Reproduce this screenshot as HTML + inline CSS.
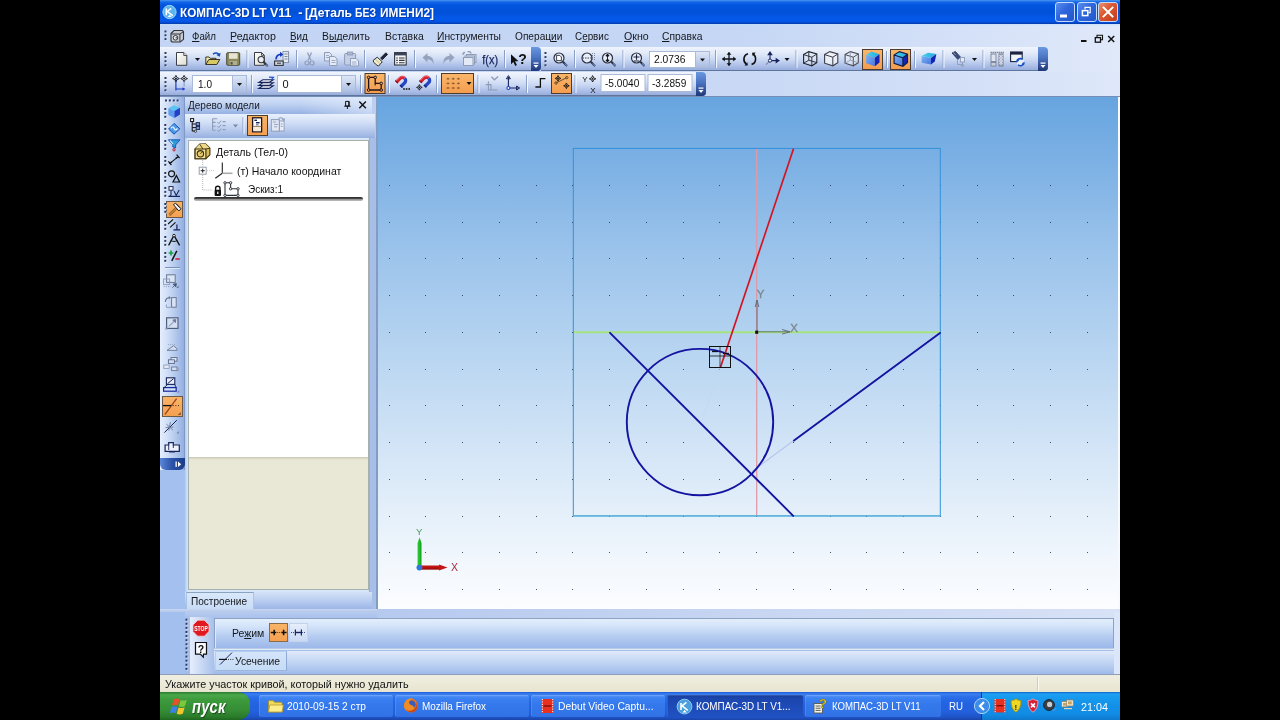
<!DOCTYPE html>
<html lang="ru">
<head>
<meta charset="utf-8">
<title>КОМПАС-3D LT V11 - [Деталь БЕЗ ИМЕНИ2]</title>
<style>
*{box-sizing:border-box;margin:0;padding:0}
html,body{width:1280px;height:720px;overflow:hidden;background:#000}
body{font-family:"Liberation Sans",sans-serif;font-size:11px;color:#000;position:relative}
#root{position:absolute;left:-16px;top:-16px;width:1312px;height:752px;overflow:hidden;background:#000;filter:blur(0.6px)}
#frame{position:absolute;left:16px;top:16px;width:1280px;height:720px}
.t{position:absolute;white-space:nowrap}
svg{position:absolute;left:0;top:0;overflow:visible}
svg text{font-family:"Liberation Sans",sans-serif}
</style>
</head>
<body>
<div id="root"><div id="frame">
<!-- s_top -->
<div style="position:absolute;left:160px;top:0px;width:960px;height:720px;background:#d9e4f8"></div>
<div style="position:absolute;left:160px;top:-16px;width:960px;height:17px;background:#4a95f0"></div>
<div style="position:absolute;left:160px;top:0px;width:960px;height:24px;background:linear-gradient(to bottom,#4a95f0 0,#1467e8 2px,#0355df 5px,#0250d8 12px,#0458e8 18px,#0557ea 21px,#0447cc 23px,#03389e 24px)"></div>
<div class="t" style="left:180px;top:3.5px;width:260px;height:18px;color:#fff;font-weight:bold;font-size:12.5px"><span style="position:absolute;left:-0.4px;top:0;line-height:18px;white-space:pre;transform:scaleX(0.9345);transform-origin:0 50%;text-shadow:1px 1px 0 rgba(10,40,130,0.55)">КОМПАС-3D </span><span style="position:absolute;left:72.1px;top:0;line-height:18px;white-space:pre;letter-spacing:0.156px;text-shadow:1px 1px 0 rgba(10,40,130,0.55)">LT </span><span style="position:absolute;left:90.2px;top:0;line-height:18px;white-space:pre;transform:scaleX(0.9929);transform-origin:0 50%;text-shadow:1px 1px 0 rgba(10,40,130,0.55)">V11 </span><span style="position:absolute;left:118.3px;top:0;line-height:18px;white-space:pre;text-shadow:1px 1px 0 rgba(10,40,130,0.55)">- </span><span style="position:absolute;left:124.6px;top:0;line-height:18px;white-space:pre;transform:scaleX(0.9650);transform-origin:0 50%;text-shadow:1px 1px 0 rgba(10,40,130,0.55)">[Деталь </span><span style="position:absolute;left:175.2px;top:0;line-height:18px;white-space:pre;transform:scaleX(0.8349);transform-origin:0 50%;text-shadow:1px 1px 0 rgba(10,40,130,0.55)">БЕЗ </span><span style="position:absolute;left:199.6px;top:0;line-height:18px;white-space:pre;transform:scaleX(0.9497);transform-origin:0 50%;text-shadow:1px 1px 0 rgba(10,40,130,0.55)">ИМЕНИ2]</span></div>
<div style="position:absolute;left:1055px;top:2px;width:20px;height:20px;border:1px solid #c4dcfa;border-radius:3px;background:linear-gradient(135deg,#5a8ff0 0,#2f66dc 45%,#2358cc 100%)"></div>
<div style="position:absolute;left:1077px;top:2px;width:20px;height:20px;border:1px solid #c4dcfa;border-radius:3px;background:linear-gradient(135deg,#5a8ff0 0,#2f66dc 45%,#2358cc 100%)"></div>
<div style="position:absolute;left:1098px;top:2px;width:20px;height:20px;border:1px solid #c4dcfa;border-radius:3px;background:linear-gradient(135deg,#ee9070 0,#dc5a34 40%,#c23c18 100%)"></div>
<div style="position:absolute;left:160px;top:24px;width:960px;height:23px;background:linear-gradient(to right,#c3d4f4 0,#c5d7f5 60%,#d2dff7 80%,#e0e9fa 100%)"></div>
<div style="position:absolute;left:160px;top:24px;width:960px;height:2px;background:linear-gradient(to bottom,rgba(190,222,250,0.7),rgba(190,222,250,0))"></div>
<div class="t" style="left:192.30px;top:27.79px;font-size:11px;line-height:16px;color:#15171c;transform:scaleX(0.8838);transform-origin:0 50%;"><u>Ф</u>айл</div>
<div class="t" style="left:230.40px;top:27.79px;font-size:11px;line-height:16px;color:#15171c;transform:scaleX(0.9672);transform-origin:0 50%;"><u>Р</u>едактор</div>
<div class="t" style="left:290.40px;top:27.79px;font-size:11px;line-height:16px;color:#15171c;transform:scaleX(0.8944);transform-origin:0 50%;"><u>В</u>ид</div>
<div class="t" style="left:322.30px;top:27.79px;font-size:11px;line-height:16px;color:#15171c;transform:scaleX(0.9439);transform-origin:0 50%;">В<u>ы</u>делить</div>
<div class="t" style="left:384.50px;top:27.79px;font-size:11px;line-height:16px;color:#15171c;transform:scaleX(0.9465);transform-origin:0 50%;">Вст<u>а</u>вка</div>
<div class="t" style="left:436.80px;top:27.79px;font-size:11px;line-height:16px;color:#15171c;transform:scaleX(0.9331);transform-origin:0 50%;"><u>И</u>нструменты</div>
<div class="t" style="left:514.80px;top:27.79px;font-size:11px;line-height:16px;color:#15171c;transform:scaleX(0.9212);transform-origin:0 50%;">Операц<u>и</u>и</div>
<div class="t" style="left:575.40px;top:27.79px;font-size:11px;line-height:16px;color:#15171c;transform:scaleX(0.8973);transform-origin:0 50%;">С<u>е</u>рвис</div>
<div class="t" style="left:623.50px;top:27.79px;font-size:11px;line-height:16px;color:#15171c;transform:scaleX(0.9663);transform-origin:0 50%;"><u>О</u>кно</div>
<div class="t" style="left:661.80px;top:27.79px;font-size:11px;line-height:16px;color:#15171c;transform:scaleX(0.9362);transform-origin:0 50%;"><u>С</u>правка</div>
<div style="position:absolute;left:160px;top:47px;width:960px;height:25px;background:linear-gradient(to right,#c4d5f4 0,#c8d8f5 60%,#d6e2f8 85%,#e0e9fa 100%)"></div>
<div style="position:absolute;left:160px;top:72px;width:960px;height:25px;background:linear-gradient(to right,#c4d4f3 0,#c8d8f5 60%,#d4e0f7 85%,#dee8fa 100%)"></div>
<div style="position:absolute;left:160px;top:47px;width:381px;height:24px;background:linear-gradient(to bottom,#f0f4fd 0,#e3ebf9 25%,#cad8f3 55%,#a9bce6 85%,#98addc 100%);border-bottom:1px solid #5f769c;border-radius:0 0 4px 0"></div>
<div style="position:absolute;left:541px;top:47px;width:507px;height:24px;background:linear-gradient(to bottom,#f0f4fd 0,#e3ebf9 25%,#cad8f3 55%,#a9bce6 85%,#98addc 100%);border-bottom:1px solid #5f769c;border-radius:0 4px 4px 0"></div>
<div style="position:absolute;left:160px;top:72px;width:546px;height:24px;background:linear-gradient(to bottom,#f0f4fd 0,#e3ebf9 25%,#cad8f3 55%,#a9bce6 85%,#98addc 100%);border-bottom:1px solid #5f769c;border-radius:0 4px 4px 0"></div>
<div style="position:absolute;left:531px;top:47px;width:10px;height:24px;background:linear-gradient(to bottom,#6a98e0 0,#4a72c0 45%,#1e3878 100%);border-radius:0 4px 4px 0"></div>
<div style="position:absolute;left:1038px;top:47px;width:10px;height:24px;background:linear-gradient(to bottom,#6a98e0 0,#4a72c0 45%,#1e3878 100%);border-radius:0 4px 4px 0"></div>
<div style="position:absolute;left:696px;top:72px;width:10px;height:24px;background:linear-gradient(to bottom,#6a98e0 0,#4a72c0 45%,#1e3878 100%);border-radius:0 4px 4px 0"></div>
<div style="position:absolute;left:160px;top:96px;width:960px;height:1.4px;background:#748eb6"></div>
<!-- s_left -->
<div style="position:absolute;left:160px;top:97px;width:25px;height:579px;background:#a3c0ee"></div>
<div style="position:absolute;left:160px;top:97px;width:25px;height:373px;background:linear-gradient(to right,#e4eefc 0,#d4e2f8 25%,#b4caee 60%,#90acdf 100%);border-radius:0 0 0 0"></div>
<div style="position:absolute;left:184px;top:97px;width:1px;height:373px;background:#7f98c8"></div>
<div style="position:absolute;left:160px;top:458px;width:25px;height:12px;background:linear-gradient(to right,#5a86d8 0,#2a52a8 50%,#1a3c88 100%);border-radius:0 0 6px 6px"></div>
<div style="position:absolute;left:166px;top:201px;width:17px;height:17px;background:linear-gradient(to bottom,#f9b468,#f5a050);border:1px solid #6b5a4a"></div>
<div style="position:absolute;left:162px;top:396px;width:21px;height:21px;background:linear-gradient(to bottom,#f9b468,#f5a050);border:1px solid #6b5a4a"></div>
<!-- s_tree -->
<div style="position:absolute;left:185px;top:97px;width:192px;height:515px;background:#b6cbee"></div>
<div style="position:absolute;left:185px;top:97px;width:187px;height:17px;background:linear-gradient(to bottom,#d3e1f7 0,#c1d3f2 40%,#a4bde9 80%,#96b1e2 100%)"></div>
<div style="position:absolute;left:300px;top:97px;width:72px;height:17px;background:linear-gradient(to right,rgba(235,242,253,0),rgba(235,242,253,0.55))"></div>
<div class="t" style="left:188.00px;top:97.19px;font-size:11px;line-height:16px;color:#1a1c22;transform:scaleX(0.9103);transform-origin:0 50%;">Дерево модели</div>
<div style="position:absolute;left:185px;top:114px;width:190px;height:24px;background:linear-gradient(to bottom,#e8f0fc 0,#d2dff6 35%,#b0c4ea 75%,#98b0e0 100%)"></div>
<div style="position:absolute;left:247px;top:115px;width:21px;height:21px;background:linear-gradient(to bottom,#f9b468,#f5a050);border:1px solid #4c4030"></div>
<div style="position:absolute;left:185px;top:138px;width:187px;height:454px;background:linear-gradient(to right,#b4cdf0 0,#d6e6f6 3px,#d6e6f6 183px,#b8cdee 187px);"></div>
<div style="position:absolute;left:188px;top:140px;width:180.5px;height:449.6px;background:#e9e7d6;border:1px solid #a6b0ae"></div>
<div style="position:absolute;left:189px;top:141px;width:179px;height:316px;background:#fff"></div>
<div style="position:absolute;left:189px;top:457px;width:179px;height:3px;background:linear-gradient(to bottom,#c9c7b4,#dcd9c6,#ece9d8)"></div>
<div style="position:absolute;left:368.5px;top:138px;width:8.5px;height:474px;background:linear-gradient(to right,#92a8cc 0,#a6bee8 1.5px,#a8c0e8 100%)"></div>
<div style="position:absolute;left:372px;top:97px;width:5px;height:17px;background:#bccff0"></div>
<div style="position:absolute;left:376.4px;top:97px;width:1.6px;height:515px;background:#849cc2"></div>
<div style="position:absolute;left:185px;top:591.5px;width:187px;height:19px;background:linear-gradient(to bottom,#d4e1f7 0,#b9cdf0 45%,#94b0e4 100%)"></div>
<div style="position:absolute;left:186px;top:592px;width:68px;height:18px;background:linear-gradient(to bottom,#d9e8fa,#c8dcf6);border:1px solid #a9c4e4;border-top-color:#8aa4c0"></div>
<div class="t" style="left:191.00px;top:592.79px;font-size:11px;line-height:16px;color:#15171c;transform:scaleX(0.9142);transform-origin:0 50%;">Построение</div>
<div class="t" style="left:216.00px;top:143.79px;font-size:11px;line-height:16px;color:#111;transform:scaleX(0.9623);transform-origin:0 50%;">Деталь (Тел-0)</div>
<div class="t" style="left:237.00px;top:162.79px;font-size:11px;line-height:16px;color:#111;transform:scaleX(0.9534);transform-origin:0 50%;">(т) Начало координат</div>
<div class="t" style="left:247.50px;top:181.49px;font-size:11px;line-height:16px;color:#111;transform:scaleX(0.9072);transform-origin:0 50%;">Эскиз:1</div>
<div style="position:absolute;left:194px;top:197px;width:168.5px;height:3.6px;background:linear-gradient(to bottom,#2c2c2c 0,#3c3c3c 35%,#8c8c8c 55%,#c4c4c4 100%);border-radius:2px"></div>
<!-- s_canvas -->
<svg width="1280" height="720" viewBox="0 0 1280 720">
<defs><linearGradient id="cg" x1="0" y1="0" x2="0" y2="1"><stop offset="0" stop-color="#67a5e0"/><stop offset="0.12" stop-color="#7bb0e4"/><stop offset="0.3" stop-color="#9bc3eb"/><stop offset="0.5" stop-color="#b8d5f1"/><stop offset="0.7" stop-color="#d5e6f7"/><stop offset="0.88" stop-color="#eef5fc"/><stop offset="1" stop-color="#fcfdff"/></linearGradient><clipPath id="cc"><rect x="378" y="97" width="742" height="512"/></clipPath></defs>
<rect x="378" y="97" width="742" height="512.5" fill="url(#cg)"/>
<rect x="376.4" y="97" width="1.6" height="512.5" fill="#849cc2"/>
<rect x="1118" y="97" width="2" height="513.5" fill="#f6f9fe"/>
<path d="M389 185h1v1h-1zM425 185h1v1h-1zM462 185h1v1h-1zM499 185h1v1h-1zM536 185h1v1h-1zM572 185h1v1h-1zM609 185h1v1h-1zM646 185h1v1h-1zM683 185h1v1h-1zM719 185h1v1h-1zM756 185h1v1h-1zM793 185h1v1h-1zM830 185h1v1h-1zM866 185h1v1h-1zM903 185h1v1h-1zM940 185h1v1h-1zM977 185h1v1h-1zM1013 185h1v1h-1zM1050 185h1v1h-1zM1087 185h1v1h-1zM389 222h1v1h-1zM425 222h1v1h-1zM462 222h1v1h-1zM499 222h1v1h-1zM536 222h1v1h-1zM572 222h1v1h-1zM609 222h1v1h-1zM646 222h1v1h-1zM683 222h1v1h-1zM719 222h1v1h-1zM756 222h1v1h-1zM793 222h1v1h-1zM830 222h1v1h-1zM866 222h1v1h-1zM903 222h1v1h-1zM940 222h1v1h-1zM977 222h1v1h-1zM1013 222h1v1h-1zM1050 222h1v1h-1zM1087 222h1v1h-1zM389 258h1v1h-1zM425 258h1v1h-1zM462 258h1v1h-1zM499 258h1v1h-1zM536 258h1v1h-1zM572 258h1v1h-1zM609 258h1v1h-1zM646 258h1v1h-1zM683 258h1v1h-1zM719 258h1v1h-1zM756 258h1v1h-1zM793 258h1v1h-1zM830 258h1v1h-1zM866 258h1v1h-1zM903 258h1v1h-1zM940 258h1v1h-1zM977 258h1v1h-1zM1013 258h1v1h-1zM1050 258h1v1h-1zM1087 258h1v1h-1zM389 295h1v1h-1zM425 295h1v1h-1zM462 295h1v1h-1zM499 295h1v1h-1zM536 295h1v1h-1zM572 295h1v1h-1zM609 295h1v1h-1zM646 295h1v1h-1zM683 295h1v1h-1zM719 295h1v1h-1zM756 295h1v1h-1zM793 295h1v1h-1zM830 295h1v1h-1zM866 295h1v1h-1zM903 295h1v1h-1zM940 295h1v1h-1zM977 295h1v1h-1zM1013 295h1v1h-1zM1050 295h1v1h-1zM1087 295h1v1h-1zM389 332h1v1h-1zM425 332h1v1h-1zM462 332h1v1h-1zM499 332h1v1h-1zM536 332h1v1h-1zM572 332h1v1h-1zM609 332h1v1h-1zM646 332h1v1h-1zM683 332h1v1h-1zM719 332h1v1h-1zM756 332h1v1h-1zM793 332h1v1h-1zM830 332h1v1h-1zM866 332h1v1h-1zM903 332h1v1h-1zM940 332h1v1h-1zM977 332h1v1h-1zM1013 332h1v1h-1zM1050 332h1v1h-1zM1087 332h1v1h-1zM389 369h1v1h-1zM425 369h1v1h-1zM462 369h1v1h-1zM499 369h1v1h-1zM536 369h1v1h-1zM572 369h1v1h-1zM609 369h1v1h-1zM646 369h1v1h-1zM683 369h1v1h-1zM719 369h1v1h-1zM756 369h1v1h-1zM793 369h1v1h-1zM830 369h1v1h-1zM866 369h1v1h-1zM903 369h1v1h-1zM940 369h1v1h-1zM977 369h1v1h-1zM1013 369h1v1h-1zM1050 369h1v1h-1zM1087 369h1v1h-1zM389 405h1v1h-1zM425 405h1v1h-1zM462 405h1v1h-1zM499 405h1v1h-1zM536 405h1v1h-1zM572 405h1v1h-1zM609 405h1v1h-1zM646 405h1v1h-1zM683 405h1v1h-1zM719 405h1v1h-1zM756 405h1v1h-1zM793 405h1v1h-1zM830 405h1v1h-1zM866 405h1v1h-1zM903 405h1v1h-1zM940 405h1v1h-1zM977 405h1v1h-1zM1013 405h1v1h-1zM1050 405h1v1h-1zM1087 405h1v1h-1zM389 442h1v1h-1zM425 442h1v1h-1zM462 442h1v1h-1zM499 442h1v1h-1zM536 442h1v1h-1zM572 442h1v1h-1zM609 442h1v1h-1zM646 442h1v1h-1zM683 442h1v1h-1zM719 442h1v1h-1zM756 442h1v1h-1zM793 442h1v1h-1zM830 442h1v1h-1zM866 442h1v1h-1zM903 442h1v1h-1zM940 442h1v1h-1zM977 442h1v1h-1zM1013 442h1v1h-1zM1050 442h1v1h-1zM1087 442h1v1h-1zM389 479h1v1h-1zM425 479h1v1h-1zM462 479h1v1h-1zM499 479h1v1h-1zM536 479h1v1h-1zM572 479h1v1h-1zM609 479h1v1h-1zM646 479h1v1h-1zM683 479h1v1h-1zM719 479h1v1h-1zM756 479h1v1h-1zM793 479h1v1h-1zM830 479h1v1h-1zM866 479h1v1h-1zM903 479h1v1h-1zM940 479h1v1h-1zM977 479h1v1h-1zM1013 479h1v1h-1zM1050 479h1v1h-1zM1087 479h1v1h-1zM389 516h1v1h-1zM425 516h1v1h-1zM462 516h1v1h-1zM499 516h1v1h-1zM536 516h1v1h-1zM572 516h1v1h-1zM609 516h1v1h-1zM646 516h1v1h-1zM683 516h1v1h-1zM719 516h1v1h-1zM756 516h1v1h-1zM793 516h1v1h-1zM830 516h1v1h-1zM866 516h1v1h-1zM903 516h1v1h-1zM940 516h1v1h-1zM977 516h1v1h-1zM1013 516h1v1h-1zM1050 516h1v1h-1zM1087 516h1v1h-1zM389 552h1v1h-1zM425 552h1v1h-1zM462 552h1v1h-1zM499 552h1v1h-1zM536 552h1v1h-1zM572 552h1v1h-1zM609 552h1v1h-1zM646 552h1v1h-1zM683 552h1v1h-1zM719 552h1v1h-1zM756 552h1v1h-1zM793 552h1v1h-1zM830 552h1v1h-1zM866 552h1v1h-1zM903 552h1v1h-1zM940 552h1v1h-1zM977 552h1v1h-1zM1013 552h1v1h-1zM1050 552h1v1h-1zM1087 552h1v1h-1zM389 589h1v1h-1zM425 589h1v1h-1zM462 589h1v1h-1zM499 589h1v1h-1zM536 589h1v1h-1zM572 589h1v1h-1zM609 589h1v1h-1zM646 589h1v1h-1zM683 589h1v1h-1zM719 589h1v1h-1zM756 589h1v1h-1zM793 589h1v1h-1zM830 589h1v1h-1zM866 589h1v1h-1zM903 589h1v1h-1zM940 589h1v1h-1zM977 589h1v1h-1zM1013 589h1v1h-1zM1050 589h1v1h-1zM1087 589h1v1h-1z" fill="#1c2b45" fill-opacity="0.8"/>
<rect x="573.3" y="148.4" width="367" height="367.5" fill="none" stroke="#3391d8" stroke-width="1"/>
<line x1="573" y1="515.9" x2="940.5" y2="515.9" stroke="#5cb6da" stroke-width="1.1"/>
<line x1="756.7" y1="149" x2="756.7" y2="515" stroke="#e09aa6" stroke-width="1.3"/>
<line x1="574" y1="332.3" x2="940" y2="332.3" stroke="#a6e37c" stroke-width="2"/>
<line x1="793.4" y1="440.8" x2="752" y2="471.5" stroke="#b4c4e8" stroke-width="1.2" opacity="0.9"/>
<line x1="720" y1="368" x2="702" y2="420" stroke="#c4d4ee" stroke-width="1" opacity="0.6"/>
<g stroke="#5e6872" stroke-width="0.9" fill="none"><line x1="757" y1="332" x2="757" y2="300"/><path d="M755.2 307l1.8-7 1.8 7"/><line x1="757" y1="331.8" x2="790" y2="331.8"/><path d="M782 329.5l8 2.3-8 2.3"/></g>
<text x="756.8" y="298" font-size="11.5" fill="#7c8890" stroke="#7c8890" stroke-width="0.35">Y</text>
<text x="790.3" y="331.6" font-size="11.5" fill="#7c8890" stroke="#7c8890" stroke-width="0.35">X</text>
<rect x="755.2" y="330.6" width="3" height="3.2" fill="#111"/>
<g stroke="#1414a0" stroke-width="1.9" fill="none" stroke-linecap="round"><circle cx="700" cy="422.1" r="73.2"/><line x1="610" y1="332.8" x2="793.2" y2="515.8"/><line x1="940" y1="333" x2="794" y2="440.6"/></g>
<line x1="793.5" y1="148.8" x2="720.6" y2="367" stroke="#d41422" stroke-width="1.7"/>
<g stroke="#111" stroke-width="1" fill="none"><rect x="709.5" y="346.5" width="21" height="21"/><line x1="710" y1="356" x2="730" y2="356" stroke-opacity="0.8"/><line x1="720" y1="347" x2="720" y2="367" stroke-opacity="0.7"/><line x1="712" y1="351.5" x2="718" y2="351.5" stroke-width="1.3"/><line x1="723" y1="353.5" x2="729" y2="353.5" stroke-width="1.3"/></g>
<path d="M417.6 567v-24l1.9-5.5 1.9 5.5v24z" fill="#22c430"/><path d="M419.5 537.5l1.9 5.5v24h-1.2z" fill="#14a020" opacity="0.7"/><path d="M421 565.4h18l0-1 8.5 3.1-8.5 3.1 0-1h-18z" fill="#c41414"/><path d="M421 567.6h18v2h-18z" fill="#8c0c0c" opacity="0.6"/><circle cx="419.4" cy="567.6" r="2.9" fill="#2a78dc"/>
<text x="416" y="535" font-size="8.5" fill="#4c9c5c" textLength="6.5" lengthAdjust="spacingAndGlyphs">Y</text>
<text x="451" y="571" font-size="10.5" fill="#a8283c">X</text>
</svg>
<!-- s_bottom -->
<div style="position:absolute;left:160px;top:609px;width:960px;height:3px;background:linear-gradient(to bottom,#c8d6f0,#b4c8ec)"></div>
<div style="position:absolute;left:160px;top:612px;width:960px;height:63px;background:#a3bfee"></div>
<div style="position:absolute;left:185px;top:612px;width:935px;height:63px;background:linear-gradient(to bottom,#b7cbee 0,#a8c0ec 10%,#a2bcec 100%)"></div>
<div style="position:absolute;left:377px;top:609px;width:743px;height:9px;background:linear-gradient(to right,#b6c9ee 0,#c4d3f1 40%,#d8e2f7 100%)"></div>
<div style="position:absolute;left:190px;top:617px;width:24px;height:57px;background:linear-gradient(to right,#e6eefc,#c8d8f4 50%,#a8c0ea)"></div>
<div style="position:absolute;left:214px;top:618px;width:900px;height:32px;background:linear-gradient(to bottom,#e3eefc 0,#d3e3f9 25%,#b4cbf0 60%,#9ab6ea 100%);border:1px solid #8ba2c8;border-top-color:#8da3c4"></div>
<div style="position:absolute;left:214px;top:651px;width:900px;height:21px;background:linear-gradient(to bottom,#e0eafb 0,#c9daf5 40%,#a6c0ec 100%)"></div>
<div style="position:absolute;left:214px;top:648px;width:900px;height:2.4px;background:linear-gradient(to bottom,#8fa6cc,#e4eefb 50%,#dce8fa)"></div>
<div style="position:absolute;left:214.5px;top:619px;width:1.6px;height:29px;background:#e2f0fc;opacity:0.85"></div>
<div style="position:absolute;left:1114px;top:612px;width:6px;height:63px;background:#dbe6fa"></div>
<div style="position:absolute;left:215px;top:651px;width:72px;height:20px;background:linear-gradient(to bottom,#d4e5fa,#c6dbf6);border:1px solid #b5cff0;border-right-color:#8faad4;border-bottom-color:#9cb6dc"></div>
<div style="position:absolute;left:269px;top:623px;width:19px;height:19px;background:linear-gradient(to bottom,#f9b468,#f5a050);border:1px solid #8a6a4a"></div>
<div style="position:absolute;left:289px;top:623px;width:19px;height:19px;background:linear-gradient(to bottom,#e6eefb,#cad9f3);border:1px solid #c4d2ea"></div>
<div class="t" style="left:232.00px;top:625.49px;font-size:11px;line-height:16px;color:#15171c;transform:scaleX(0.9524);transform-origin:0 50%;">Ре<u>ж</u>им</div>
<div class="t" style="left:235.00px;top:652.79px;font-size:11px;line-height:16px;color:#15171c;transform:scaleX(0.9436);transform-origin:0 50%;">Усечение</div>
<div style="position:absolute;left:160px;top:674px;width:960px;height:1px;background:#8e9db8"></div>
<div style="position:absolute;left:160px;top:675px;width:960px;height:18px;background:linear-gradient(to bottom,#f0eee0,#ebe8d6 60%,#e6e3d0)"></div>
<div style="position:absolute;left:1037px;top:677px;width:1px;height:14px;background:#d0cdb8;box-shadow:1px 0 0 #fbfaf0"></div>
<div class="t" style="left:165.00px;top:675.69px;font-size:11px;line-height:16px;color:#111;transform:scaleX(0.9797);transform-origin:0 50%;">Укажите участок кривой, который нужно удалить</div>
<!-- s_task -->
<div style="position:absolute;left:160px;top:719px;width:960px;height:17px;background:#1a44a8"></div>
<div style="position:absolute;left:160px;top:719px;width:90px;height:17px;background:#1f661f"></div>
<div style="position:absolute;left:160px;top:692px;width:960px;height:28px;background:linear-gradient(to bottom,#1a58d8 0,#3a80f0 2px,#2a6ee8 5px,#2362e0 12px,#2360dc 20px,#1f54c8 25px,#1a44a8 28px)"></div>
<div style="position:absolute;left:160px;top:692px;width:90px;height:28px;background:linear-gradient(to bottom,#2a7a2a 0,#4aa84a 3px,#3c9a3c 8px,#358e35 18px,#2a7a2a 25px,#1f661f 28px);border-radius:0 12px 12px 0"></div>
<div class="t" style="left:191.5px;top:694px;font-size:18.5px;line-height:25px;font-weight:bold;font-style:italic;color:#fff;text-shadow:1px 1px 1px #1a4a1a;transform:scaleX(0.8);transform-origin:0 0;letter-spacing:0.2px">пуск</div>
<div style="position:absolute;left:259px;top:695px;width:134px;height:22px;background:linear-gradient(to bottom,#5a98f8 0,#3c82f2 3px,#3478ec 10px,#3274e8 20px,#2a66d8 26px);border-radius:2px;box-shadow:inset 1px 1px 0 rgba(255,255,255,0.12)"></div>
<div class="t" style="left:287.00px;top:698.49px;font-size:11px;line-height:16px;color:#fff;transform:scaleX(0.9277);transform-origin:0 50%;">2010-09-15 2 стр</div>
<div style="position:absolute;left:395px;top:695px;width:134px;height:22px;background:linear-gradient(to bottom,#5a98f8 0,#3c82f2 3px,#3478ec 10px,#3274e8 20px,#2a66d8 26px);border-radius:2px;box-shadow:inset 1px 1px 0 rgba(255,255,255,0.12)"></div>
<div class="t" style="left:421.50px;top:698.49px;font-size:11px;line-height:16px;color:#fff;transform:scaleX(0.9026);transform-origin:0 50%;">Mozilla Firefox</div>
<div style="position:absolute;left:531px;top:695px;width:134px;height:22px;background:linear-gradient(to bottom,#5a98f8 0,#3c82f2 3px,#3478ec 10px,#3274e8 20px,#2a66d8 26px);border-radius:2px;box-shadow:inset 1px 1px 0 rgba(255,255,255,0.12)"></div>
<div class="t" style="left:557.50px;top:698.49px;font-size:11px;line-height:16px;color:#fff;transform:scaleX(0.9370);transform-origin:0 50%;">Debut Video Captu...</div>
<div style="position:absolute;left:667px;top:695px;width:136px;height:22px;background:linear-gradient(to bottom,#173e9a 0,#1c46ae 4px,#1e4cba 14px,#2152c4 24px);border-radius:2px;box-shadow:inset 1px 1px 0 rgba(255,255,255,0.12)"></div>
<div class="t" style="left:695.50px;top:698.49px;font-size:11px;line-height:16px;color:#fff;transform:scaleX(0.8980);transform-origin:0 50%;">КОМПАС-3D LT V1...</div>
<div style="position:absolute;left:805px;top:695px;width:136px;height:22px;background:linear-gradient(to bottom,#5a98f8 0,#3c82f2 3px,#3478ec 10px,#3274e8 20px,#2a66d8 26px);border-radius:2px;box-shadow:inset 1px 1px 0 rgba(255,255,255,0.12)"></div>
<div class="t" style="left:831.50px;top:698.49px;font-size:11px;line-height:16px;color:#fff;transform:scaleX(0.8731);transform-origin:0 50%;">КОМПАС-3D LT V11</div>
<div class="t" style="left:949.00px;top:698.49px;font-size:11px;line-height:16px;color:#fff;transform:scaleX(0.8812);transform-origin:0 50%;">RU</div>
<div style="position:absolute;left:981px;top:692px;width:139px;height:28px;background:linear-gradient(to bottom,#0f68c8 0,#1ea0f4 2px,#169aee 6px,#1290e8 14px,#118ce4 22px,#0e78cc 28px);border-left:1px solid #0c3c8c"></div>
<div class="t" style="left:1080.50px;top:698.79px;font-size:11px;line-height:16px;color:#fff;transform:scaleX(0.9808);transform-origin:0 50%;">21:04</div>
<!-- s_icons -->
<svg width="1280" height="720" viewBox="0 0 1280 720">
<defs><linearGradient id="og" x1="0" y1="0" x2="0" y2="1"><stop offset="0" stop-color="#f9b76c"/><stop offset="1" stop-color="#f49c4e"/></linearGradient><linearGradient id="bg2" x1="0" y1="0" x2="0" y2="1"><stop offset="0" stop-color="#dfe8f8"/><stop offset="1" stop-color="#a9bce2"/></linearGradient><linearGradient id="cubeL" x1="0" y1="0" x2="1" y2="1"><stop offset="0" stop-color="#78b4f4"/><stop offset="1" stop-color="#4a74e0"/></linearGradient><linearGradient id="cubeT" x1="0" y1="0" x2="1" y2="0"><stop offset="0" stop-color="#4ad0e8"/><stop offset="1" stop-color="#28a8e0"/></linearGradient><linearGradient id="paper" x1="0" y1="0" x2="1" y2="1"><stop offset="0" stop-color="#ffffff"/><stop offset="1" stop-color="#dcdcd0"/></linearGradient></defs>
<circle cx="169.5" cy="12" r="6.6" fill="#5ab4ee" stroke="#9fd8fa" stroke-width="1"/><path d="M166.3 8.6v6.6M166.6 12l4.6-3.6M167.4 11.6l5.4 4" stroke="#fff" stroke-width="1.5" fill="none"/><path d="M167.5 17l2.2-2.2 2.2 2.2z" fill="#fff"/>
<rect x="1060" y="14.5" width="7" height="3" fill="#fff"/><g fill="none" stroke="#fff" stroke-width="1.2"><path d="M1085 9.6v-2.2h5.2v5.2h-1.8" stroke-opacity="0.95"/><rect x="1082.4" y="10.6" width="5.4" height="5" stroke-width="1.5"/></g><path d="M1103.5 7.5l9 9M1112.5 7.5l-9 9" stroke="#fff" stroke-width="1.9" stroke-linecap="square"/>
<rect x="1081" y="40" width="5.5" height="2" fill="#111"/><g fill="none" stroke="#111" stroke-width="1.1"><path d="M1097 37v-1.8h5.5v4.5h-1.5"/><rect x="1095.3" y="37.6" width="5.2" height="4.6" stroke-width="1.3"/></g><path d="M1108.2 36l6 6M1114.2 36l-6 6" stroke="#111" stroke-width="1.5"/>
<rect x="165.1" y="31.1" width="2" height="2" fill="#fff" opacity="0.8"/><rect x="164.5" y="30.5" width="2" height="2" fill="#2a3a66"/><rect x="165.1" y="34.9" width="2" height="2" fill="#fff" opacity="0.8"/><rect x="164.5" y="34.3" width="2" height="2" fill="#2a3a66"/><rect x="165.1" y="38.7" width="2" height="2" fill="#fff" opacity="0.8"/><rect x="164.5" y="38.1" width="2" height="2" fill="#2a3a66"/><g transform="translate(170 29)" ><path d="M1 4.5l3-3h8.5l1 1.2v7.6l-3.2 2.7h-8.3l-1-1z" fill="#c9ccd2" stroke="#30343c" stroke-width="1.1"/><path d="M1.3 5h8.6v7.6M10 5l3.2-2.2" fill="none" stroke="#30343c" stroke-width="1"/><circle cx="5.5" cy="8.8" r="2.3" fill="#eee" stroke="#30343c" stroke-width="1"/><path d="M5.5 8.8h1.8" stroke="#30343c" stroke-width="1"/></g>
<rect x="165.1" y="52.6" width="2" height="2" fill="#fff" opacity="0.8"/><rect x="164.5" y="52.0" width="2" height="2" fill="#2a3a66"/><rect x="165.1" y="56.7" width="2" height="2" fill="#fff" opacity="0.8"/><rect x="164.5" y="56.1" width="2" height="2" fill="#2a3a66"/><rect x="165.1" y="60.800000000000004" width="2" height="2" fill="#fff" opacity="0.8"/><rect x="164.5" y="60.2" width="2" height="2" fill="#2a3a66"/><rect x="165.1" y="64.89999999999999" width="2" height="2" fill="#fff" opacity="0.8"/><rect x="164.5" y="64.3" width="2" height="2" fill="#2a3a66"/><g transform="translate(176 52)" ><path d="M0.5 0.5h7.3l3 3v9.8h-10.3z" fill="url(#paper)" stroke="#3c3f48" stroke-width="1"/><path d="M7.8 0.5v3h3" fill="#e8e8e0" stroke="#3c3f48" stroke-width="0.9"/></g>
<path d="M195 58h5l-2.5 3z" fill="#111"/><g transform="translate(205 51)" ><path d="M0.8 13.5v-7.5h3.2l1.2 1.3h5.8v1.6" fill="#f6efb4" stroke="#3a3420" stroke-width="1"/><path d="M0.8 13.5l3-5h11l-3 5z" fill="#d6c864" stroke="#3a3420" stroke-width="1"/><path d="M8 3.2c2.2-2 5-1.6 6.2 0.8" fill="none" stroke="#1c4ab8" stroke-width="1.5"/><path d="M15.6 1.8l-0.8 4-3.4-1.8z" fill="#1c4ab8"/></g>
<g transform="translate(226 52)" ><rect x="0.7" y="0.7" width="13" height="12.6" rx="1" fill="#8c8a5c" stroke="#4a4a38" stroke-width="1"/><rect x="3" y="1.2" width="8.6" height="5.6" fill="#e6e4d4"/><rect x="3.6" y="9" width="7.4" height="4" fill="#b0ae90"/><rect x="4.6" y="10" width="2" height="2.6" fill="#55543c"/></g>
<rect x="246.5" y="50" width="1" height="18" fill="#8c9fc6"/><rect x="247.5" y="50" width="1" height="18" fill="#f4f8ff"/><g transform="translate(254 52)" ><path d="M0.5 0.5h7l2.8 2.8v10h-9.8z" fill="url(#paper)" stroke="#3c3f48" stroke-width="1"/><path d="M7.5 0.5v2.8h2.8" fill="none" stroke="#3c3f48" stroke-width="0.9"/><circle cx="7.2" cy="7.6" r="3.1" fill="#eef2f8" fill-opacity="0.7" stroke="#30343c" stroke-width="1.1"/><path d="M9.6 10l4 4" stroke="#30343c" stroke-width="1.8"/><path d="M12 12.6l2 2" stroke="#6a7cb8" stroke-width="1.4"/></g>
<g transform="translate(274 51)" ><rect x="9" y="0.6" width="5.6" height="11" fill="#e8ebf0" stroke="#7a8aa0" stroke-width="0.9"/><path d="M10.5 3h3M10.5 5.5h3M10.5 8h3" stroke="#5a6c8c" stroke-width="0.8"/><rect x="0.6" y="10" width="8.6" height="4.4" fill="#d4d8e0" stroke="#30343c" stroke-width="1.1"/><path d="M3 12.2h4" stroke="#30343c" stroke-width="1"/><path d="M2.2 8.4c-0.4-3 1.6-5 4.6-5" fill="none" stroke="#1a3cc0" stroke-width="1.8"/><path d="M6 0.8l3.4 2.6-3.4 2.6z" fill="#1a3cc0"/></g>
<rect x="296" y="50" width="1" height="18" fill="#8c9fc6"/><rect x="297" y="50" width="1" height="18" fill="#f4f8ff"/><g transform="translate(304 52)" ><path d="M3.5 0.5l3.5 8M7.5 0.5l-3.5 8" stroke="#8e9cb8" stroke-width="1.2" fill="none"/><circle cx="3" cy="11" r="2" fill="none" stroke="#8e9cb8" stroke-width="1.2"/><circle cx="8" cy="11" r="2" fill="none" stroke="#8e9cb8" stroke-width="1.2"/></g>
<g transform="translate(324 52)" ><path d="M0.5 0.5h5l2 2v6.5h-7z" fill="#dfe6f4" stroke="#8e9cb8" stroke-width="1"/><path d="M5.5 4.5h5l2.5 2.5v6.5h-7.5z" fill="#e4eaf6" stroke="#8e9cb8" stroke-width="1"/><path d="M2 3.5h3M2 5.5h3M7.5 8.5h4M7.5 10.5h4" stroke="#8e9cb8" stroke-width="0.8"/></g>
<g transform="translate(344 51)" ><rect x="0.6" y="2.5" width="11" height="11.5" rx="1" fill="#c4cee4" stroke="#8e9cb8" stroke-width="1"/><rect x="3.5" y="1" width="5.2" height="3" fill="#aab6d0" stroke="#8e9cb8" stroke-width="0.8"/><path d="M6.5 7.5h5.5l2.5 2.5v5h-8z" fill="#e8edf8" stroke="#8e9cb8" stroke-width="1"/><path d="M8 11h4.5M8 13h4.5" stroke="#8e9cb8" stroke-width="0.8"/></g>
<rect x="364" y="50" width="1" height="18" fill="#8c9fc6"/><rect x="365" y="50" width="1" height="18" fill="#f4f8ff"/><g transform="translate(372 51)" ><path d="M8.6 7l5.2-5.2 1.8 1.6-5.4 5.4z" fill="#202838" stroke="#10141c" stroke-width="0.8"/><path d="M1 9.6l4.2-3.4 5 4.6-3.6 4.2c-2.2-0.8-4.6-2.8-5.6-5.4z" fill="#f0ecc8" stroke="#30343c" stroke-width="1"/><path d="M3.4 8.2l4.6 4.6" stroke="#b4b08a" stroke-width="0.8"/></g>
<g transform="translate(394 52)" ><rect x="0.6" y="0.6" width="11.6" height="12.4" fill="#f4f5f7" stroke="#30343c" stroke-width="1.1"/><rect x="0.6" y="0.6" width="11.6" height="2.8" fill="#3a4258"/><path d="M2.2 6h1.6M5 6h5.6M2.2 8.4h1.6M5 8.4h5.6M2.2 10.8h1.6M5 10.8h5.6" stroke="#30343c" stroke-width="1.1"/></g>
<rect x="414" y="50" width="1" height="18" fill="#8c9fc6"/><rect x="415" y="50" width="1" height="18" fill="#f4f8ff"/><g transform="translate(422 52)" ><path d="M0.5 5.5l5-4.5v3c4 0 6.6 2.6 6 8.5-1-3.6-2.6-5-6-5v3z" fill="#8e9cb8" opacity="0.9"/></g>
<g transform="translate(442 52)" ><path d="M12.5 5.5l-5-4.5v3c-4 0-6.6 2.6-6 8.5 1-3.6 2.6-5 6-5v3z" fill="#8e9cb8" opacity="0.9"/></g>
<g transform="translate(462 51)" ><path d="M3 1.5c-2 0-2.4 1.4-1.6 2.4M5.5 0.8c2-0.8 3.6 0.4 3.4 1.8" fill="none" stroke="#8e9cb8" stroke-width="1.3"/><rect x="4.5" y="3.5" width="9.5" height="8" fill="#d4dcec" stroke="#8e9cb8" stroke-width="1"/><rect x="3" y="5" width="9.5" height="8" fill="#dce3f0" stroke="#8e9cb8" stroke-width="1"/><rect x="1.5" y="6.5" width="9.5" height="8" fill="#e4eaf5" stroke="#8e9cb8" stroke-width="1"/></g>
<text x="482.3" y="64" font-size="13.5" fill="#18245c" stroke="#18245c" stroke-width="0.25" textLength="15.8" lengthAdjust="spacingAndGlyphs">f(x)</text>
<rect x="504" y="50" width="1" height="18" fill="#8c9fc6"/><rect x="505" y="50" width="1" height="18" fill="#f4f8ff"/><g transform="translate(510 52)" ><path d="M1 2.2v10l2.4-2.3 1.8 4 1.7-0.8-1.8-3.9h3.4z" fill="#111"/></g>
<text x="518.3" y="64.3" font-size="14" font-weight="bold" fill="#111">?</text>
<rect x="533.5" y="62.5" width="5" height="1.2" fill="#fff"/><path d="M533.5 65.1h5l-2.5 2.8z" fill="#fff"/><rect x="545.1" y="52.6" width="2" height="2" fill="#fff" opacity="0.8"/><rect x="544.5" y="52.0" width="2" height="2" fill="#2a3a66"/><rect x="545.1" y="56.7" width="2" height="2" fill="#fff" opacity="0.8"/><rect x="544.5" y="56.1" width="2" height="2" fill="#2a3a66"/><rect x="545.1" y="60.800000000000004" width="2" height="2" fill="#fff" opacity="0.8"/><rect x="544.5" y="60.2" width="2" height="2" fill="#2a3a66"/><rect x="545.1" y="64.89999999999999" width="2" height="2" fill="#fff" opacity="0.8"/><rect x="544.5" y="64.3" width="2" height="2" fill="#2a3a66"/><g transform="translate(553 52)" ><circle cx="6" cy="6" r="5" fill="#eef3fb" fill-opacity="0.75" stroke="#2a3040" stroke-width="1.2"/><path d="M3.6 3.4h3.2l1.6 1.6v3.6h-4.8z" fill="#fff" stroke="#2a3040" stroke-width="0.9"/><path d="M9.8 9.8l4.2 4.2" stroke="#2a3040" stroke-width="2"/><path d="M11.6 11.4l2.6 2.6" stroke="#6a82c0" stroke-width="1.3"/></g>
<rect x="574" y="50" width="1" height="18" fill="#8c9fc6"/><rect x="575" y="50" width="1" height="18" fill="#f4f8ff"/><g transform="translate(581 52)" ><circle cx="6" cy="6" r="5" fill="#eef3fb" fill-opacity="0.75" stroke="#2a3040" stroke-width="1.2"/><path d="M1.5 6h9" stroke="#2a3040" stroke-width="0.9" stroke-dasharray="1.5 1"/><path d="M9.8 9.8l4.2 4.2" stroke="#2a3040" stroke-width="2"/><path d="M11.6 11.4l2.6 2.6" stroke="#6a82c0" stroke-width="1.3"/><path d="M11.5 1v7M13.5 1v7" stroke="#6a7488" stroke-width="0.8" stroke-dasharray="1 1"/></g>
<g transform="translate(601.5 52)" ><circle cx="6" cy="6" r="5" fill="#eef3fb" fill-opacity="0.75" stroke="#2a3040" stroke-width="1.2"/><path d="M6 2.4v7.2M6 2l-1.6 2h3.2zM6 10l-1.6-2h3.2z" stroke="#111" stroke-width="0.9" fill="#111"/><path d="M9.8 9.8l4.2 4.2" stroke="#2a3040" stroke-width="2"/><path d="M11.6 11.4l2.6 2.6" stroke="#6a82c0" stroke-width="1.3"/></g>
<rect x="622.5" y="50" width="1" height="18" fill="#8c9fc6"/><rect x="623.5" y="50" width="1" height="18" fill="#f4f8ff"/><g transform="translate(630.5 52)" ><circle cx="6" cy="6" r="5" fill="#eef3fb" fill-opacity="0.75" stroke="#2a3040" stroke-width="1.2"/><path d="M3 5h6M6 2.2v5.6M3.4 9h5.2" stroke="#1c2440" stroke-width="1.1"/><path d="M9.8 9.8l4.2 4.2" stroke="#2a3040" stroke-width="2"/><path d="M11.6 11.4l2.6 2.6" stroke="#6a82c0" stroke-width="1.3"/></g>
<rect x="649.5" y="51.5" width="46" height="16" fill="#fff" stroke="#a9b9d8" stroke-width="1"/><rect x="695.5" y="51.5" width="14" height="16" fill="url(#bg2)" stroke="#a9b9d8" stroke-width="1"/><path d="M700.0 58.5h5l-2.5 3z" fill="#111"/><rect x="715" y="50" width="1" height="18" fill="#8c9fc6"/><rect x="716" y="50" width="1" height="18" fill="#f4f8ff"/><g transform="translate(722 52)" ><path d="M7 0.5v13M0.5 7h13" stroke="#111" stroke-width="1.3"/><path d="M7 0l-2.4 2.8h4.8zM7 14l-2.4-2.8h4.8zM0 7l2.8-2.4v4.8zM14 7l-2.8-2.4v4.8z" fill="#111"/></g>
<g transform="translate(742 52)" ><path d="M6 1.8c-4.6 1-5.6 7.4-1.6 10.4" fill="none" stroke="#111" stroke-width="1.6"/><path d="M9.6 12.4c4.6-1 5.4-7.6 1.4-10.4" fill="none" stroke="#111" stroke-width="1.6"/><path d="M2.4 13.4l3.4 0.2-0.4-3.4zM13.6 0.6l-3.6 0.2 0.8 3.4z" fill="#111"/></g>
<g transform="translate(765 52)" ><path d="M5 8.6v-7M5 0l-1.8 2.8h3.6z" stroke="#18245c" stroke-width="1.1" fill="#18245c"/><path d="M5 8.6h8M14 8.6l-2.8-1.8v3.6z" stroke="#18245c" stroke-width="1.1" fill="#18245c"/><path d="M5 8.6l-4 4" stroke="#7a86a8" stroke-width="1.1"/><circle cx="5" cy="8.6" r="1.6" fill="#fff" stroke="#18245c" stroke-width="1"/></g>
<path d="M784.5 58h5l-2.5 3z" fill="#111"/><rect x="795.5" y="50" width="1" height="18" fill="#8c9fc6"/><rect x="796.5" y="50" width="1" height="18" fill="#f4f8ff"/><g transform="translate(803 51)" ><path d="M0.6 3.6l5.2-3 8 2.4v8.6l-5 3.2-8.2-2.6z" fill="#e8edf6" fill-opacity="0.4" stroke="#20242c" stroke-width="1.1"/><path d="M0.6 3.6l8.2 2.6 5-3.2M8.8 6.2v8.6M5.8 0.6v8.6l-5.2 3M5.8 9.2l8 2.4" fill="none" stroke="#20242c" stroke-width="0.9"/></g>
<g transform="translate(824 51)" ><path d="M0.6 3.6l5.2-3 8 2.4v8.6l-5 3.2-8.2-2.6z" fill="#f2f4f8" fill-opacity="0.8" stroke="#3a3e48" stroke-width="1.1"/><path d="M0.6 3.6l8.2 2.6 5-3.2M8.8 6.2v8.6" fill="none" stroke="#3a3e48" stroke-width="1"/></g>
<g transform="translate(844.5 51)" ><path d="M0.6 3.6l5.2-3 8 2.4v8.6l-5 3.2-8.2-2.6z" fill="#e8ecf4" fill-opacity="0.6" stroke="#4a4e58" stroke-width="1.1"/><path d="M0.6 3.6l8.2 2.6 5-3.2M8.8 6.2v8.6" fill="none" stroke="#4a4e58" stroke-width="1"/><path d="M5.8 0.6v8.6l-5.2 3M5.8 9.2l8 2.4" fill="none" stroke="#8a92a4" stroke-width="0.8"/></g>
<rect x="862.5" y="49.5" width="20" height="20" fill="url(#og)" stroke="#4a3c30" stroke-width="1"/><g transform="translate(865.5 51)" ><path d="M0.6 4l5.4-3.4 8 2.6-4.6 3.6z" fill="url(#cubeT)"/><path d="M0.6 4l8.8 2.8v8.4l-8.8-3z" fill="url(#cubeL)"/><path d="M9.4 6.8l4.6-3.6v8.2l-4.6 3.8z" fill="#1424b4"/></g>
<rect x="886" y="51" width="1" height="17" fill="#8c9fc6"/><rect x="887" y="51" width="1" height="17" fill="#f4f8ff"/><rect x="890.5" y="49.5" width="20" height="20" fill="url(#og)" stroke="#4a3c30" stroke-width="1"/><g transform="translate(893.5 51)" ><path d="M0.6 4l5.4-3.4 8 2.6-4.6 3.6z" fill="url(#cubeT)"/><path d="M0.6 4l8.8 2.8v8.4l-8.8-3z" fill="url(#cubeL)"/><path d="M9.4 6.8l4.6-3.6v8.2l-4.6 3.8z" fill="#1424b4"/><path d="M0.6 4l5.4-3.4 8 2.6v8.2l-4.6 3.8-8.8-3zM0.6 4l8.8 2.8 4.6-3.6M9.4 6.8v8.4" fill="none" stroke="#10204c" stroke-width="1.2"/></g>
<rect x="914" y="51" width="1" height="17" fill="#8c9fc6"/><rect x="915" y="51" width="1" height="17" fill="#f4f8ff"/><g transform="translate(921 52)" ><path d="M0.6 4l6.4-3.2 8.4 1.2-5.4 4z" fill="url(#cubeT)"/><path d="M0.6 4l9.4 2v6.4l-9.4-1.6z" fill="url(#cubeL)"/><path d="M10 6l5.4-4-1.6 7.4-3.8 3z" fill="#1424b4"/></g>
<rect x="942.5" y="50" width="1" height="18" fill="#8c9fc6"/><rect x="943.5" y="50" width="1" height="18" fill="#f4f8ff"/><g transform="translate(951 51)" ><path d="M1 2l3.4-1.6 5 5.6-2.6 2.4z" fill="#3a4c7c" stroke="#28365c" stroke-width="0.8"/><path d="M2.4 1.4l2 2.4" stroke="#8aa0d0" stroke-width="1"/><rect x="9.5" y="6.5" width="4" height="4.5" fill="#e4e9f4" stroke="#8e9cb8" stroke-width="0.9"/><path d="M6.5 9v4.5h6M11.5 11v4M9.5 15h4" fill="none" stroke="#8e9cb8" stroke-width="0.9"/></g>
<path d="M972 58h5l-2.5 3z" fill="#111"/><rect x="982.5" y="50" width="1" height="18" fill="#8c9fc6"/><rect x="983.5" y="50" width="1" height="18" fill="#f4f8ff"/><g transform="translate(990 51)" ><path d="M0.6 1.5h14" stroke="#6a7488" stroke-width="1.6" stroke-dasharray="1.2 0.8"/><rect x="1" y="3" width="5" height="7.5" fill="#dfe4ee" stroke="#7a8498" stroke-width="0.9"/><rect x="1" y="11.5" width="5" height="3.6" fill="#c8cedc" stroke="#7a8498" stroke-width="0.9"/><rect x="9" y="3" width="4" height="12" fill="#b8bece" stroke="#6a7488" stroke-width="0.9"/><path d="M9 4l4 3M9 7l4 3M9 10l4 3M13 4l-4 3M13 7l-4 3M13 10l-4 3" stroke="#eef" stroke-width="0.6"/></g>
<g transform="translate(1010 51)" ><rect x="0.6" y="1" width="11.6" height="9.6" fill="#f0f3f8" stroke="#1c2440" stroke-width="1.1"/><rect x="0.6" y="1" width="11.6" height="2.6" fill="#1c2440"/><circle cx="10.4" cy="11.2" r="3.6" fill="#e8eef8" stroke="#1c50c8" stroke-width="1.6" stroke-dasharray="8 3"/><path d="M6.4 8.4l3 0-1.4 2.6zM14.4 14l-3 0 1.4-2.6z" fill="#1c50c8"/></g>
<rect x="1040.5" y="62.5" width="5" height="1.2" fill="#fff"/><path d="M1040.5 65.1h5l-2.5 2.8z" fill="#fff"/><rect x="165.1" y="77.6" width="2" height="2" fill="#fff" opacity="0.8"/><rect x="164.5" y="77.0" width="2" height="2" fill="#2a3a66"/><rect x="165.1" y="81.69999999999999" width="2" height="2" fill="#fff" opacity="0.8"/><rect x="164.5" y="81.1" width="2" height="2" fill="#2a3a66"/><rect x="165.1" y="85.8" width="2" height="2" fill="#fff" opacity="0.8"/><rect x="164.5" y="85.2" width="2" height="2" fill="#2a3a66"/><rect x="165.1" y="89.89999999999999" width="2" height="2" fill="#fff" opacity="0.8"/><rect x="164.5" y="89.3" width="2" height="2" fill="#2a3a66"/><g transform="translate(172.5 75)" ><path d="M3.4 3.2v12.4M3.4 14h8.6" stroke="#1c3cc8" stroke-width="1.2" fill="none"/><path d="M12.6 14l-2.6-1.8v3.6z" fill="#1c3cc8"/><path d="M3.4 0.4l1.2 2.2 2.2 1-2.2 1-1.2 2.2-1.2-2.2-2.2-1 2.2-1zM11.6 0.4l1.2 2.2 2.2 1-2.2 1-1.2 2.2-1.2-2.2-2.2-1 2.2-1z" fill="none" stroke="#111" stroke-width="0.9"/><circle cx="3.4" cy="3.6" r="0.9" fill="#111"/><circle cx="11.6" cy="3.6" r="0.9" fill="#111"/><path d="M11.6 6.5v5" stroke="#6a80c0" stroke-width="0.8"/></g>
<rect x="192.5" y="75.5" width="40" height="17" fill="#fff" stroke="#a9b9d8" stroke-width="1"/><rect x="232.5" y="75.5" width="14" height="17" fill="url(#bg2)" stroke="#a9b9d8" stroke-width="1"/><path d="M237.0 83.0h5l-2.5 3z" fill="#111"/><rect x="251" y="75" width="1" height="18" fill="#8c9fc6"/><rect x="252" y="75" width="1" height="18" fill="#f4f8ff"/><g transform="translate(258 76)" ><path d="M0.8 12.4l4-2.6h10.4l-4 2.6z" fill="#f4f6fa" stroke="#18245c" stroke-width="1.1"/><path d="M0.8 9.4l4-2.6h10.4l-4 2.6z" fill="#f4f6fa" stroke="#18245c" stroke-width="1.1"/><path d="M0.8 6.4l4-2.6h10.4l-4 2.6z" fill="#f4f6fa" stroke="#18245c" stroke-width="1.1"/><path d="M11 1.2l4.4 0.2-2.2 2.6" fill="none" stroke="#2850d0" stroke-width="1.2"/></g>
<rect x="277.5" y="75.5" width="64" height="17" fill="#fff" stroke="#a9b9d8" stroke-width="1"/><rect x="341.5" y="75.5" width="14" height="17" fill="url(#bg2)" stroke="#a9b9d8" stroke-width="1"/><path d="M346.0 83.0h5l-2.5 3z" fill="#111"/><rect x="360" y="75" width="1" height="18" fill="#8c9fc6"/><rect x="361" y="75" width="1" height="18" fill="#f4f8ff"/><rect x="365.0" y="73.5" width="20" height="20" fill="url(#og)" stroke="#4a3c30" stroke-width="1"/><g transform="translate(367 76)" ><path d="M1.6 1.4h6.6v6h6v6.6h-12.6z" fill="none" stroke="#20141c" stroke-width="1.3"/><g fill="#f7a85c" stroke="#20141c" stroke-width="1"><circle cx="1.6" cy="1.4" r="1.3"/><circle cx="8.2" cy="1.4" r="1.3"/><circle cx="14.2" cy="7.4" r="1.3"/><circle cx="14.2" cy="14" r="1.3"/><circle cx="1.6" cy="14" r="1.3"/></g><path d="M8.2 7.4h2M8.2 9.5v-2" stroke="#20141c" stroke-width="1"/></g>
<rect x="388" y="75" width="1" height="18" fill="#8c9fc6"/><rect x="389" y="75" width="1" height="18" fill="#f4f8ff"/><g transform="translate(402.4 80.6) rotate(45)" fill="none" stroke-width="3.4"><path d="M-3.2 5.6V0A3.2 3.2 0 0 1 0 -3.2" stroke="#d6202e"/><path d="M0 -3.2A3.2 3.2 0 0 1 3.2 0V5.6" stroke="#2746c4"/><path d="M-3.2 5.6v-1.4" stroke="#8a1018"/><path d="M3.2 5.6v-1.4" stroke="#16247c"/><path d="M-4.2 4.6V0A4.2 4.2 0 0 1 0 -4.2" stroke="#f08c94" stroke-width="0.8" opacity="0.8"/></g><rect x="403.2" y="88.2" width="1.6" height="1.6" fill="#111"/><rect x="405.8" y="88.2" width="1.6" height="1.6" fill="#111"/><rect x="408.4" y="88.2" width="1.6" height="1.6" fill="#111"/><g transform="translate(426.4 80.4) rotate(45)" fill="none" stroke-width="3.4"><path d="M-3.2 5.6V0A3.2 3.2 0 0 1 0 -3.2" stroke="#d6202e"/><path d="M0 -3.2A3.2 3.2 0 0 1 3.2 0V5.6" stroke="#2746c4"/><path d="M-3.2 5.6v-1.4" stroke="#8a1018"/><path d="M3.2 5.6v-1.4" stroke="#16247c"/><path d="M-4.2 4.6V0A4.2 4.2 0 0 1 0 -4.2" stroke="#f08c94" stroke-width="0.8" opacity="0.8"/></g><g transform="translate(419.4 87.4)" ><path d="M0 -2.8l0.9 1.9 1.9 0.9-1.9 0.9-0.9 1.9-0.9-1.9-1.9-0.9 1.9-0.9z" fill="none" stroke="#111" stroke-width="0.9"/><circle cx="0" cy="0" r="0.8" fill="#111"/></g>
<rect x="436" y="75" width="1" height="18" fill="#8c9fc6"/><rect x="437" y="75" width="1" height="18" fill="#f4f8ff"/><rect x="441.5" y="73.5" width="32" height="20" fill="url(#og)" stroke="#4a3c30" stroke-width="1"/><path d="M446.5 78.8h3M448.0 77.8v2" stroke="#6a4422" stroke-width="0.8" opacity="0.85"/><path d="M451.7 78.8h3M453.2 77.8v2" stroke="#6a4422" stroke-width="0.8" opacity="0.85"/><path d="M456.9 78.8h3M458.4 77.8v2" stroke="#6a4422" stroke-width="0.8" opacity="0.85"/><path d="M446.5 83.39999999999999h3M448.0 82.39999999999999v2" stroke="#6a4422" stroke-width="0.8" opacity="0.85"/><path d="M451.7 83.39999999999999h3M453.2 82.39999999999999v2" stroke="#6a4422" stroke-width="0.8" opacity="0.85"/><path d="M456.9 83.39999999999999h3M458.4 82.39999999999999v2" stroke="#6a4422" stroke-width="0.8" opacity="0.85"/><path d="M446.5 88.0h3M448.0 87.0v2" stroke="#6a4422" stroke-width="0.8" opacity="0.85"/><path d="M451.7 88.0h3M453.2 87.0v2" stroke="#6a4422" stroke-width="0.8" opacity="0.85"/><path d="M456.9 88.0h3M458.4 87.0v2" stroke="#6a4422" stroke-width="0.8" opacity="0.85"/><path d="M466.5 82h5l-2.5 3z" fill="#111"/><rect x="477.5" y="75" width="1" height="18" fill="#8c9fc6"/><rect x="478.5" y="75" width="1" height="18" fill="#f4f8ff"/><g transform="translate(485 76)" ><path d="M3.4 5.2v8.8h9M0.6 8.6h5.4v5.4" fill="none" stroke="#8e9cb8" stroke-width="1.1"/><path d="M6.4 0.8l3 3 3.8-3.4" fill="none" stroke="#8e9cb8" stroke-width="1.3"/></g>
<g transform="translate(506 75)" ><path d="M2.4 13v-11M2.4 13h10.4" stroke="#18245c" stroke-width="1.1" fill="none"/><path d="M2.4 0.6l-2 3.2h4zM13.6 13l-3-2v4z" fill="none" stroke="#18245c" stroke-width="1"/><circle cx="2.4" cy="13" r="1.5" fill="#fff" stroke="#1c3cc8" stroke-width="1.1"/></g>
<rect x="526" y="75" width="1" height="18" fill="#8c9fc6"/><rect x="527" y="75" width="1" height="18" fill="#f4f8ff"/><g transform="translate(535 78)" ><path d="M0.4 9h5v-8.4h5" fill="none" stroke="#111" stroke-width="1.3"/></g>
<rect x="551.5" y="73.5" width="20" height="20" fill="url(#og)" stroke="#4a3c30" stroke-width="1"/><g transform="translate(553 75)" ><path d="M3.4 7.8l10-5" stroke="#6a5030" stroke-width="1"/><circle cx="3" cy="8" r="1.2" fill="none" stroke="#5a4020" stroke-width="0.9"/><circle cx="13.8" cy="2.6" r="1.2" fill="none" stroke="#5a4020" stroke-width="0.9"/><path d="M5 0.6l0.9 1.9 1.9 0.9-1.9 0.9-0.9 1.9-0.9-1.9-1.9-0.9 1.9-0.9zM13.4 8l0.9 1.9 1.9 0.9-1.9 0.9-0.9 1.9-0.9-1.9-1.9-0.9 1.9-0.9z" fill="none" stroke="#111" stroke-width="0.9"/><circle cx="5" cy="3.4" r="0.9" fill="#111"/><circle cx="13.4" cy="10.8" r="0.9" fill="#111"/></g>
<rect x="574.5" y="75" width="1" height="18" fill="#8c9fc6"/><rect x="575.5" y="75" width="1" height="18" fill="#f4f8ff"/><text x="582.3" y="81.6" font-size="8" fill="#111">Y</text><text x="590.3" y="92.5" font-size="8" fill="#111">X</text><g transform="translate(588 75)" ><path d="M4.6 0.6l1 2.2 2.2 1-2.2 1-1 2.2-1-2.2-2.2-1 2.2-1z" fill="none" stroke="#111" stroke-width="0.9"/><circle cx="4.6" cy="3.8" r="0.9" fill="#111"/></g>
<rect x="601.0" y="74.5" width="44" height="17" fill="#fff" stroke="#a9b9d8" stroke-width="1"/><rect x="648.0" y="74.5" width="44" height="17" fill="#fff" stroke="#a9b9d8" stroke-width="1"/><rect x="698.5" y="87.5" width="5" height="1.2" fill="#fff"/><path d="M698.5 90.1h5l-2.5 2.8z" fill="#fff"/></svg>
<div class="t" style="left:653.60px;top:50.79px;font-size:11px;line-height:16px;color:#111;transform:scaleX(0.9362);transform-origin:0 50%;">2.0736</div>
<div class="t" style="left:198.00px;top:75.59px;font-size:11px;line-height:16px;color:#111;transform:scaleX(0.9155);transform-origin:0 50%;">1.0</div>
<div class="t" style="left:282.50px;top:75.59px;font-size:11px;line-height:16px;color:#111;">0</div>
<div class="t" style="left:604.60px;top:74.79px;font-size:11px;line-height:16px;color:#111;transform:scaleX(0.9194);transform-origin:0 50%;">-5.0040</div>
<div class="t" style="left:652.00px;top:74.79px;font-size:11px;line-height:16px;color:#111;transform:scaleX(0.9194);transform-origin:0 50%;">-3.2859</div>
<!-- s_icons2 -->
<svg width="1280" height="720" viewBox="0 0 1280 720">
<rect x="165.6" y="100.1" width="2" height="2" fill="#fff" opacity="0.8"/><rect x="165.0" y="99.5" width="2" height="2" fill="#2a3a66"/><rect x="169.5" y="100.1" width="2" height="2" fill="#fff" opacity="0.8"/><rect x="168.9" y="99.5" width="2" height="2" fill="#2a3a66"/><rect x="173.4" y="100.1" width="2" height="2" fill="#fff" opacity="0.8"/><rect x="172.8" y="99.5" width="2" height="2" fill="#2a3a66"/><rect x="177.29999999999998" y="100.1" width="2" height="2" fill="#fff" opacity="0.8"/><rect x="176.7" y="99.5" width="2" height="2" fill="#2a3a66"/><rect x="164.9" y="108.6" width="2" height="2" fill="#fff" opacity="0.8"/><rect x="164.3" y="108.0" width="2" height="2" fill="#2a3a66"/><rect x="164.9" y="112.5" width="2" height="2" fill="#fff" opacity="0.8"/><rect x="164.3" y="111.9" width="2" height="2" fill="#2a3a66"/><rect x="164.9" y="116.39999999999999" width="2" height="2" fill="#fff" opacity="0.8"/><rect x="164.3" y="115.8" width="2" height="2" fill="#2a3a66"/><rect x="164.9" y="124.6" width="2" height="2" fill="#fff" opacity="0.8"/><rect x="164.3" y="124.0" width="2" height="2" fill="#2a3a66"/><rect x="164.9" y="128.5" width="2" height="2" fill="#fff" opacity="0.8"/><rect x="164.3" y="127.9" width="2" height="2" fill="#2a3a66"/><rect x="164.9" y="132.4" width="2" height="2" fill="#fff" opacity="0.8"/><rect x="164.3" y="131.8" width="2" height="2" fill="#2a3a66"/><rect x="164.9" y="140.6" width="2" height="2" fill="#fff" opacity="0.8"/><rect x="164.3" y="140.0" width="2" height="2" fill="#2a3a66"/><rect x="164.9" y="144.5" width="2" height="2" fill="#fff" opacity="0.8"/><rect x="164.3" y="143.9" width="2" height="2" fill="#2a3a66"/><rect x="164.9" y="148.4" width="2" height="2" fill="#fff" opacity="0.8"/><rect x="164.3" y="147.8" width="2" height="2" fill="#2a3a66"/><rect x="164.9" y="156.6" width="2" height="2" fill="#fff" opacity="0.8"/><rect x="164.3" y="156.0" width="2" height="2" fill="#2a3a66"/><rect x="164.9" y="160.5" width="2" height="2" fill="#fff" opacity="0.8"/><rect x="164.3" y="159.9" width="2" height="2" fill="#2a3a66"/><rect x="164.9" y="164.4" width="2" height="2" fill="#fff" opacity="0.8"/><rect x="164.3" y="163.8" width="2" height="2" fill="#2a3a66"/><rect x="164.9" y="172.6" width="2" height="2" fill="#fff" opacity="0.8"/><rect x="164.3" y="172.0" width="2" height="2" fill="#2a3a66"/><rect x="164.9" y="176.5" width="2" height="2" fill="#fff" opacity="0.8"/><rect x="164.3" y="175.9" width="2" height="2" fill="#2a3a66"/><rect x="164.9" y="180.4" width="2" height="2" fill="#fff" opacity="0.8"/><rect x="164.3" y="179.8" width="2" height="2" fill="#2a3a66"/><rect x="164.9" y="187.6" width="2" height="2" fill="#fff" opacity="0.8"/><rect x="164.3" y="187.0" width="2" height="2" fill="#2a3a66"/><rect x="164.9" y="191.5" width="2" height="2" fill="#fff" opacity="0.8"/><rect x="164.3" y="190.9" width="2" height="2" fill="#2a3a66"/><rect x="164.9" y="195.4" width="2" height="2" fill="#fff" opacity="0.8"/><rect x="164.3" y="194.8" width="2" height="2" fill="#2a3a66"/><rect x="164.9" y="203.6" width="2" height="2" fill="#fff" opacity="0.8"/><rect x="164.3" y="203.0" width="2" height="2" fill="#2a3a66"/><rect x="164.9" y="207.5" width="2" height="2" fill="#fff" opacity="0.8"/><rect x="164.3" y="206.9" width="2" height="2" fill="#2a3a66"/><rect x="164.9" y="211.4" width="2" height="2" fill="#fff" opacity="0.8"/><rect x="164.3" y="210.8" width="2" height="2" fill="#2a3a66"/><rect x="164.9" y="220.6" width="2" height="2" fill="#fff" opacity="0.8"/><rect x="164.3" y="220.0" width="2" height="2" fill="#2a3a66"/><rect x="164.9" y="224.5" width="2" height="2" fill="#fff" opacity="0.8"/><rect x="164.3" y="223.9" width="2" height="2" fill="#2a3a66"/><rect x="164.9" y="228.4" width="2" height="2" fill="#fff" opacity="0.8"/><rect x="164.3" y="227.8" width="2" height="2" fill="#2a3a66"/><rect x="164.9" y="236.6" width="2" height="2" fill="#fff" opacity="0.8"/><rect x="164.3" y="236.0" width="2" height="2" fill="#2a3a66"/><rect x="164.9" y="240.5" width="2" height="2" fill="#fff" opacity="0.8"/><rect x="164.3" y="239.9" width="2" height="2" fill="#2a3a66"/><rect x="164.9" y="244.4" width="2" height="2" fill="#fff" opacity="0.8"/><rect x="164.3" y="243.8" width="2" height="2" fill="#2a3a66"/><rect x="164.9" y="252.6" width="2" height="2" fill="#fff" opacity="0.8"/><rect x="164.3" y="252.0" width="2" height="2" fill="#2a3a66"/><rect x="164.9" y="256.5" width="2" height="2" fill="#fff" opacity="0.8"/><rect x="164.3" y="255.9" width="2" height="2" fill="#2a3a66"/><rect x="164.9" y="260.40000000000003" width="2" height="2" fill="#fff" opacity="0.8"/><rect x="164.3" y="259.8" width="2" height="2" fill="#2a3a66"/><g transform="translate(168 105)" ><path d="M0.4 3.2l5.6-3 6 2.6-5.6 3.2z" fill="#5cc4f0"/><path d="M0.4 3.2l6 2.8v7l-6-3z" fill="#5a9cf0"/><path d="M6.4 6l5.6-3.2v6.8l-5.6 3.4z" fill="#2040c8"/></g>
<g transform="translate(168 123)" ><path d="M0.6 6l5.6-5.6 5.6 5.4-5.8 5.4z" fill="#4a9ce8" stroke="#1c50b8" stroke-width="1"/><path d="M3 5.4c1-2 2.4-2 3.2 0s2.2 2 3.2 0" fill="none" stroke="#e4f0fc" stroke-width="1.4"/></g>
<g transform="translate(168 139)" ><path d="M0.4 0.8h11.6l-4.4 5.2v3l-2.8-1v-2z" fill="#2a9cd8" stroke="#1c50b8" stroke-width="0.9"/><path d="M2 1.4l3 3.6" stroke="#bfe6fa" stroke-width="1.2"/><circle cx="6" cy="10.8" r="1.2" fill="none" stroke="#d01828" stroke-width="1"/></g>
<g transform="translate(168 154)" ><path d="M1.6 9.6l8.6-7" stroke="#111" stroke-width="1.1"/><path d="M0.4 7.4l3 3.6M8.6 0.6l3 3.6" stroke="#111" stroke-width="1.2"/><path d="M1.8 9.4l2.6-0.6-1.4-1.6zM10 2.8l-2.6 0.6 1.4 1.6z" fill="#111"/></g>
<g transform="translate(168 170)" ><circle cx="3.6" cy="3.8" r="3" fill="none" stroke="#111" stroke-width="1.2"/><path d="M8.4 5.6l3.2 6.4h-6.6z" fill="none" stroke="#111" stroke-width="1.2"/></g>
<g transform="translate(168 186)" ><rect x="1" y="0.6" width="4" height="3.6" fill="#fff" stroke="#18245c" stroke-width="1"/><path d="M3 4.4v4.8M0.4 10.4h11.6M3 9.2l-2 1.4M6 5l2.2 4.4 3-5.4" fill="none" stroke="#18245c" stroke-width="1.1"/></g>
<g transform="translate(168 203)" ><path d="M1.4 12l7-7" stroke="#8a5a20" stroke-width="2.6"/><path d="M1.4 12l7-7" stroke="#c88a3c" stroke-width="1.2"/><path d="M5.4 1.6l2.2-1.4 5.4 5.6-2.2 2.2z" fill="#f4f4f4" stroke="#20242c" stroke-width="1"/><path d="M8.4 1l3.4 3.6" stroke="#20242c" stroke-width="0.9"/></g>
<g transform="translate(167.5 219)" ><path d="M0.6 5l5-4.6M2.6 8.4l5.4-5" stroke="#111" stroke-width="1.1"/><path d="M9.4 5.4v5.4M6 10.8h6.6" stroke="#18245c" stroke-width="1.2"/></g>
<g transform="translate(168 234)" ><path d="M0.6 11.4l5.4-10 5.6 10" fill="none" stroke="#111" stroke-width="1.3"/><path d="M2.6 6.4c2.2 1.4 4.6 1.4 6.8 0" fill="none" stroke="#111" stroke-width="1"/><circle cx="6" cy="1.6" r="1.3" fill="#fff" stroke="#111" stroke-width="0.9"/></g>
<g transform="translate(168 250)" ><path d="M3.8 10.8l5-10" stroke="#111" stroke-width="1.5"/><path d="M0.6 3h4.8M3 0.6v4.8" stroke="#18a04c" stroke-width="1.7"/><path d="M7.4 9h4.4" stroke="#d02848" stroke-width="1.7"/></g>
<rect x="165" y="267" width="15" height="1" fill="#7a90b8"/><rect x="165" y="268" width="15" height="1" fill="#eef4fc" opacity="0.7"/><g transform="translate(163 274)" ><rect x="3.6" y="0.8" width="8.6" height="7.6" fill="#dbe4f4" stroke="#6a7898" stroke-width="1"/><rect x="0.6" y="5" width="6" height="5.6" fill="none" stroke="#8e9cb8" stroke-width="0.9"/><path d="M0.6 12.6h7" stroke="#8e9cb8" stroke-width="0.9" stroke-dasharray="1.2 1"/><path d="M9.4 13.6l3.6-3.6M13.4 9.6l-3.2 0.6 2.6 2.6z" stroke="#4a5878" stroke-width="0.9" fill="#4a5878"/><path d="M15.6 11.6v2.4h-2.4z" fill="#6a7898"/></g>
<g transform="translate(164 296)" ><rect x="7.6" y="1.6" width="4.6" height="9.6" fill="#dbe4f4" stroke="#6a7898" stroke-width="1"/><path d="M1.4 6c0-3.2 2-4.6 4.6-4.2" fill="none" stroke="#6a7898" stroke-width="1.2"/><path d="M4.8 0l2.2 1.8-2.4 1.4z" fill="#6a7898"/><path d="M2.4 8.4v3h5" fill="none" stroke="#8e9cb8" stroke-width="0.9"/></g>
<g transform="translate(165 317)" ><rect x="1.6" y="0.8" width="11.4" height="10.6" fill="#d4dff2" stroke="#4a5878" stroke-width="1.1"/><path d="M4 9.4l6.4-6.4M10.8 2.6l-3 0.4 2.6 2.6z" stroke="#6a7898" stroke-width="0.9" fill="#6a7898"/><rect x="0.4" y="10.6" width="2" height="2" fill="#8a96b0"/></g>
<g transform="translate(166 344)" ><path d="M1 6.4l6.6-4.6 3.4 3v1.6z" fill="#d4dff2" stroke="#6a7898" stroke-width="0.9"/><path d="M2 0.6h8" stroke="#8e9cb8" stroke-width="0.8" stroke-dasharray="1 1"/></g>
<g transform="translate(163 357)" ><rect x="8" y="0.6" width="6" height="3.6" fill="#e4ebf7" stroke="#5a6888" stroke-width="0.9"/><rect x="5.4" y="2.8" width="6" height="3.6" fill="#d4dff2" stroke="#5a6888" stroke-width="0.9"/><rect x="0.8" y="8" width="5.4" height="3.4" fill="#e4ebf7" stroke="#8e9cb8" stroke-width="0.9"/><rect x="8.6" y="10" width="5.4" height="3.6" fill="#d4dff2" stroke="#6a7898" stroke-width="0.9"/><path d="M15.4 10.4v4" stroke="#8e9cb8" stroke-width="0.8"/></g>
<g transform="translate(163 377)" ><rect x="3.4" y="0.8" width="8.4" height="6.6" fill="#e8eef8" stroke="#18245c" stroke-width="1.1"/><path d="M4.6 6.6l6-5" stroke="#18245c" stroke-width="1"/><rect x="0.6" y="10.6" width="12.6" height="3.6" fill="#d4e0f6" stroke="#1428a0" stroke-width="1.2"/><path d="M1 10.6l3.6-3M13.2 10.6l-1.4-3" stroke="#18245c" stroke-width="0.9"/><path d="M16.4 13v2.6h-2.6z" fill="#7a86a8"/></g>
<g transform="translate(162 396)" ><path d="M3 18.4l11.6-15.8" stroke="#9a3c1c" stroke-width="1.2"/><path d="M1 9.6h8" stroke="#111" stroke-width="1.3"/><path d="M10.6 9.6h6.4" stroke="#3a2a1a" stroke-width="1" stroke-dasharray="1.1 1.6"/><path d="M18.8 16v3h-3z" fill="#7a5a3a"/></g>
<g transform="translate(164 420)" ><path d="M0.4 12.6l12.4-12.4" stroke="#18245c" stroke-width="1"/><path d="M2.4 4.2l6.6 6M6.4 2.2l-1.6 8.4M1.6 7.6l8-0.6" stroke="#6a7898" stroke-width="0.9"/><path d="M15 11v2.6h-2.6z" fill="#7a86a8"/></g>
<g transform="translate(164.5 442)" ><path d="M0.6 9.4v-6.4h3.6v-2.4h4.6v2.4h6v6.4z" fill="#eef3fb" stroke="#18245c" stroke-width="1.2"/><path d="M4.2 3v5M8.8 3v3" stroke="#18245c" stroke-width="0.9"/><path d="M5 10.6h6" stroke="#18245c" stroke-width="1" stroke-dasharray="1 1"/></g>
<rect x="175.5" y="461.5" width="1.3" height="5.4" fill="#fff"/><path d="M178 461.5l3.2 2.7-3.2 2.7z" fill="#fff"/><path d="M345.6 101.4h3.6v4.6h-3.6zM344.2 106.2h6.4M347.4 106.4v2.6" fill="none" stroke="#111" stroke-width="1"/><path d="M348.7 101.6v4.4" stroke="#111" stroke-width="0.9"/><path d="M359.3 101.6l6.6 6.6M365.9 101.6l-6.6 6.6" stroke="#111" stroke-width="1.4"/><g transform="translate(190 118)" ><rect x="0.6" y="0.6" width="3" height="3" fill="#fff" stroke="#111" stroke-width="1"/><path d="M2.2 3.8v9.4M2.2 6h4M2.2 9.6h4M2.2 13h2.6" stroke="#111" stroke-width="1" fill="none"/><rect x="6.2" y="4.6" width="3.4" height="3" fill="#8a9ab8" stroke="#18245c" stroke-width="0.9"/><rect x="6.2" y="8.4" width="3.4" height="3" fill="#8a9ab8" stroke="#18245c" stroke-width="0.9"/><circle cx="5.4" cy="13.2" r="1.1" fill="#fff" stroke="#111" stroke-width="0.8"/></g>
<g transform="translate(212 118)" ><path d="M0.6 0.8h4.6M0.6 0.8v11.4M0.6 4.4h3M0.6 8.2h3M0.6 12.2h3" stroke="#8e9cb8" stroke-width="1.1" fill="none"/><path d="M5.4 4l1.4 1.6 2.4-3M5.4 8l1.4 1.6 2.4-3M5.4 12l1.4 1.6 2.4-3" stroke="#8e9cb8" stroke-width="1" fill="none"/><path d="M10.6 3.6h3M10.6 7.6h3M10.6 11.6h3" stroke="#8e9cb8" stroke-width="1.2"/></g>
<path d="M233 124.5h5l-2.5 3z" fill="#7a88a8"/><rect x="242.5" y="117" width="1" height="17" fill="#8c9fc6"/><rect x="243.5" y="117" width="1" height="17" fill="#f4f8ff"/><g transform="translate(251 117)" ><rect x="1.6" y="0.8" width="9" height="14" fill="#fbfbfb" stroke="#20141c" stroke-width="1.3"/><rect x="2.4" y="9.6" width="7.4" height="4.6" fill="#f4ead8"/><path d="M1.6 9.4h9" stroke="#7a5a3a" stroke-width="0.8"/><rect x="3.4" y="2.6" width="2.6" height="1.4" fill="#18245c"/><rect x="5" y="5" width="3.6" height="1.4" fill="#18245c"/><rect x="5" y="7.2" width="2.6" height="1.2" fill="#6a7898"/></g>
<g transform="translate(270.5 117)" ><rect x="0.8" y="2.6" width="8" height="11.6" fill="#e0e7f4" stroke="#8e9cb8" stroke-width="1"/><rect x="9" y="4" width="4.6" height="10" fill="#e8edf7" stroke="#8e9cb8" stroke-width="0.9"/><path d="M2.4 5h3M3.6 7.4h4M3.6 9.8h3M10.2 7h2M10.2 9.4h2" stroke="#8e9cb8" stroke-width="0.9"/><path d="M8 1.4c2.2-1.2 4-0.4 5 1.4" fill="none" stroke="#8e9cb8" stroke-width="1.1"/><path d="M14.4 1l-0.4 3.4-2.6-1.6z" fill="#8e9cb8"/></g>
<g transform="translate(194.4 143)" ><path d="M0.7 6l4.6-4.9 5.6-0.4 4.6 4.5v6.6l-4 3.9h-10.8z" fill="#d8bc58" stroke="#3c300c" stroke-width="1.1" stroke-linejoin="round"/><path d="M0.7 6l4.6-4.9 5.6-0.4 4.6 4.5-4 0.8z" fill="#ecd888"/><path d="M0.7 6h10.8v9.7h-10.8z" fill="#f0e09c" stroke="#3c300c" stroke-width="1.1"/><path d="M11.5 6l4-0.8M5.3 1.1l3.2 4.9" fill="none" stroke="#3c300c" stroke-width="0.9"/><circle cx="6" cy="10.8" r="3.2" fill="#e6cc6c" stroke="#3c300c" stroke-width="1.1"/><path d="M6 10.8l2.2-2.2" stroke="#3c300c" stroke-width="0.9"/></g>
<rect x="199.2" y="167.2" width="7" height="7" fill="#fff" stroke="#98a0ac" stroke-width="1"/><path d="M200.7 170.7h4M202.7 168.7v4" stroke="#222" stroke-width="1"/><path d="M202.7 160v6.5M202.7 175v15h9.5" fill="none" stroke="#b4b4b4" stroke-width="1" stroke-dasharray="1 1"/><path d="M207 170.7h8" stroke="#c8c8c8" stroke-width="1" stroke-dasharray="1 1"/><path d="M222.3 162.5v11M222.3 173.3l-7 5" fill="none" stroke="#222" stroke-width="1.1"/><path d="M222.5 173.3h10" stroke="#a8aca8" stroke-width="1.6"/><path d="M215.6 190.6v-2.4c0-2.6 4.4-2.6 4.4 0v2.4" fill="none" stroke="#111" stroke-width="1.4"/><rect x="214.6" y="189.8" width="6.4" height="6.2" rx="1" fill="#111"/><rect x="217.2" y="191.6" width="1.2" height="2.4" fill="#fff"/><path d="M225 182.8h5.6v6h7.4v6.6h-13z" fill="#fdfdfd" stroke="#30343c" stroke-width="1.1"/><g fill="#eee" stroke="#30343c" stroke-width="0.9"><circle cx="225" cy="182.8" r="1.2"/><circle cx="230.6" cy="182.8" r="1.2"/><circle cx="238" cy="188.8" r="1.2"/><circle cx="238" cy="195.4" r="1.2"/><circle cx="225" cy="195.4" r="1.2"/><circle cx="230.6" cy="188.8" r="1.2"/></g><rect x="186.1" y="619.3000000000001" width="2" height="2" fill="#fff" opacity="0.8"/><rect x="185.5" y="618.7" width="2" height="2" fill="#2a3a66"/><rect x="186.1" y="623.4000000000001" width="2" height="2" fill="#fff" opacity="0.8"/><rect x="185.5" y="622.8000000000001" width="2" height="2" fill="#2a3a66"/><rect x="186.1" y="627.5000000000001" width="2" height="2" fill="#fff" opacity="0.8"/><rect x="185.5" y="626.9000000000001" width="2" height="2" fill="#2a3a66"/><rect x="186.1" y="631.6" width="2" height="2" fill="#fff" opacity="0.8"/><rect x="185.5" y="631.0" width="2" height="2" fill="#2a3a66"/><rect x="186.1" y="635.7" width="2" height="2" fill="#fff" opacity="0.8"/><rect x="185.5" y="635.1" width="2" height="2" fill="#2a3a66"/><rect x="186.1" y="639.8000000000001" width="2" height="2" fill="#fff" opacity="0.8"/><rect x="185.5" y="639.2" width="2" height="2" fill="#2a3a66"/><rect x="186.1" y="643.9000000000001" width="2" height="2" fill="#fff" opacity="0.8"/><rect x="185.5" y="643.3000000000001" width="2" height="2" fill="#2a3a66"/><rect x="186.1" y="648.0000000000001" width="2" height="2" fill="#fff" opacity="0.8"/><rect x="185.5" y="647.4000000000001" width="2" height="2" fill="#2a3a66"/><rect x="186.1" y="652.1" width="2" height="2" fill="#fff" opacity="0.8"/><rect x="185.5" y="651.5" width="2" height="2" fill="#2a3a66"/><rect x="186.1" y="656.2" width="2" height="2" fill="#fff" opacity="0.8"/><rect x="185.5" y="655.6" width="2" height="2" fill="#2a3a66"/><rect x="186.1" y="660.3000000000001" width="2" height="2" fill="#fff" opacity="0.8"/><rect x="185.5" y="659.7" width="2" height="2" fill="#2a3a66"/><rect x="186.1" y="664.4000000000001" width="2" height="2" fill="#fff" opacity="0.8"/><rect x="185.5" y="663.8000000000001" width="2" height="2" fill="#2a3a66"/><rect x="186.1" y="668.5000000000001" width="2" height="2" fill="#fff" opacity="0.8"/><rect x="185.5" y="667.9000000000001" width="2" height="2" fill="#2a3a66"/><path d="M197.7 620.2h6.6l4.7 4.7v6.6l-4.7 4.7h-6.6l-4.7-4.7v-6.6z" fill="#e01820" stroke="#f8d0d0" stroke-width="0.8"/><text x="194.2" y="630.6" font-size="6.4" font-weight="bold" fill="#fff" textLength="13.6" lengthAdjust="spacingAndGlyphs">STOP</text><path d="M195.5 642.5h11v11.6h-3l-0.2 3-3-3h-4.8z" fill="#f8fafd" stroke="#111" stroke-width="1.2"/><text x="197.8" y="652.6" font-size="10.5" font-weight="bold" fill="#111">?</text><path d="M270.8 632.5h5.4M281.4 632.5h5.2" stroke="#111" stroke-width="1.5"/><path d="M274.2 629.8v5.4M283.6 629.8v5.4" stroke="#111" stroke-width="1.5"/><path d="M276.8 632.5h4.4" stroke="#7a2a18" stroke-width="1.2" stroke-dasharray="1 1"/><path d="M291 632.5h3.6M302 632.5h4" stroke="#3a4c8c" stroke-width="1" stroke-dasharray="1 1"/><path d="M295.4 632.5h6" stroke="#18245c" stroke-width="1.4"/><path d="M295.4 629.6v5.8M301.4 629.6v5.8" stroke="#18245c" stroke-width="1.2"/><path d="M220 664.6l12-12" stroke="#18245c" stroke-width="1"/><path d="M219 659.4h8" stroke="#111" stroke-width="1.2"/><path d="M228 659.4h6" stroke="#333" stroke-width="1" stroke-dasharray="1 1.2"/><g transform="translate(172.4 698) scale(1.14 1.18) skewX(-6)"><path d="M1.2 1.2c2-1 3.6-0.8 5.2 0l-0.9 5.2c-1.6-0.8-3.2-1-5.2 0z" fill="#e8502c"/><path d="M7.4 1.6c1.8 0.8 3.4 0.8 5.4-0.2l-1 5.4c-2 1-3.6 1-5.4 0.2z" fill="#7cc83c"/><path d="M0 7.6c2-1 3.6-0.8 5.2 0l-1 5.4c-1.6-0.8-3.2-1-5.2 0z" fill="#3c80e8"/><path d="M6.2 8c1.8 0.8 3.4 0.8 5.4-0.2l-1 5.4c-2 1-3.6 1-5.4 0.2z" fill="#f4c42c"/></g><path d="M268.5 712v-10.4c0-0.6 0.4-1 1-1h3.6l1.6 1.6h6.4c0.6 0 1 0.4 1 1v8.8z" fill="#f0d858" stroke="#a88c20" stroke-width="0.8"/><path d="M268.5 712l1.2-7h13.6l-1.2 7z" fill="#fbec8c" stroke="#b89c30" stroke-width="0.8"/><circle cx="411" cy="705.6" r="7" fill="#e8701c"/><circle cx="411.4" cy="704.6" r="4.2" fill="#3a5cb8"/><path d="M404.2 704c1-4 5-6.4 9-5-3 0.4-4.6 2.2-4 4.4 1.4 2 4.6 1.6 5 4.4-1 3-5.6 4.6-8.6 2-1.4-1.4-2-3.6-1.4-5.8z" fill="#f08c24"/><path d="M406 709c2.4 2.6 7 2.6 9.6-1.4 0.8-1.6 1-3.6 0.4-5 1.6 2 2 5-0.2 7.8-2.6 2.8-7.4 2.6-9.8-1.4z" fill="#c84818"/><rect x="541.5" y="699" width="12" height="14" fill="#e83020"/><rect x="543.5" y="705.3" width="8" height="1.4" fill="#801010"/><path d="M542.3 699v14M552.7 699v14" stroke="#fff" stroke-width="1" stroke-dasharray="1.2 1.2"/><circle cx="684.5" cy="706.6" r="7.4" fill="#4aa0dc" stroke="#8cc8f0" stroke-width="1"/><path d="M681 703v7M681.4 706.4l5-4M682.4 706.2l5.4 4.2" stroke="#fff" stroke-width="1.6" fill="none"/><path d="M682.4 712.4l2.2-2.4 2.2 2.4z" fill="#fff"/><rect x="814" y="703.5" width="8.4" height="9.5" fill="#f4f4ec" stroke="#5a5a4c" stroke-width="0.9"/><path d="M815.6 706h5M815.6 708.2h5M815.6 710.4h5" stroke="#4a4a40" stroke-width="0.9"/><text x="819" y="708.4" font-size="13" font-weight="bold" fill="#f4e020" stroke="#6a5c10" stroke-width="0.5">?</text><circle cx="982" cy="706" r="7.6" fill="#3c8ce8" stroke="#a8d4fa" stroke-width="1"/><path d="M984 702l-4 4 4 4" fill="none" stroke="#fff" stroke-width="2.2"/><rect x="994.5" y="699" width="11" height="13.4" fill="#e83020"/><rect x="996.5" y="705" width="7" height="1.4" fill="#801010"/><path d="M995.2 699v13.4M1004.8 699v13.4" stroke="#fff" stroke-width="0.9" stroke-dasharray="1.2 1.2"/><path d="M1011 700.6c2 0 3.6-0.6 5-1.8 1.4 1.2 3 1.8 5 1.8 0 5.6-1.6 9.6-5 11.6-3.4-2-5-6-5-11.6z" fill="#f0d820" stroke="#a89010" stroke-width="0.9"/><text x="1014.6" y="709.6" font-size="8" font-weight="bold" fill="#222">!</text><path d="M1028 700.6c2 0 3.6-0.6 5-1.8 1.4 1.2 3 1.8 5 1.8 0 5.6-1.6 9.6-5 11.6-3.4-2-5-6-5-11.6z" fill="#d82038" stroke="#f0a8b4" stroke-width="0.9"/><path d="M1031 703.4l4 4M1035 703.4l-4 4" stroke="#fff" stroke-width="1.5"/><circle cx="1049" cy="705" r="5.4" fill="#3a4048" stroke="#1c2028" stroke-width="1"/><circle cx="1049.6" cy="704.4" r="2.6" fill="#c8ccd0"/><path d="M1052 709.6c1.6 1.6 3 0.6 3.6-1.6" fill="none" stroke="#5aa0e8" stroke-width="1"/><rect x="1061.5" y="701.5" width="6.4" height="5.4" fill="#f0e8d0" stroke="#8a8470" stroke-width="0.8"/><rect x="1066.5" y="700" width="6.8" height="6" fill="#f4ecd8" stroke="#8a8470" stroke-width="0.8"/><rect x="1068" y="701.4" width="3.8" height="3" fill="#c8a060"/><rect x="1063" y="703" width="3.4" height="2.6" fill="#c8a060"/><path d="M1064 708.6h8" stroke="#d8d4c0" stroke-width="1.2"/></svg>
</div></div>
</body>
</html>
